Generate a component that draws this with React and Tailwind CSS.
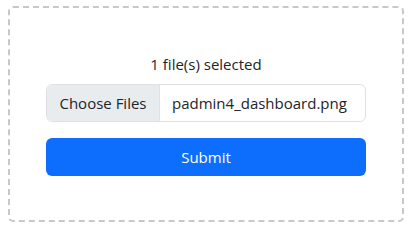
import React from 'react';

const font = { fontFamily: '"Open Sans", "Liberation Sans", Arial, sans-serif' };

export default function App() {
    return (
        <div className="w-[416px] h-[230px] bg-white pt-[6px] pl-2" style={font}>
            <div className="w-[396px] h-[216px] border-2 border-dashed border-[#c8c8c8] rounded-[5px] flex flex-col items-center justify-center text-[#212529]">
                <p className="text-[15px] leading-6 mb-2">1 file(s) selected</p>

                {/* file input group */}
                <div className="w-[320px] h-[38px] flex border border-[#dee2e6] rounded-[6px] overflow-hidden">
                    <span className="w-[113px] shrink-0 whitespace-nowrap flex items-center justify-center bg-[#e9ecef] border-r border-[#dee2e6] text-[15px]">Choose Files</span>
                    <span className="pl-3 whitespace-nowrap flex items-center text-[15px]">padmin4_dashboard.png</span>
                </div>

                <button className="mt-4 w-[320px] h-[38px] bg-[#0d6efd] text-white rounded-[6px] text-[15px]">
                    Submit
                </button>
            </div>
        </div>
    );
}
